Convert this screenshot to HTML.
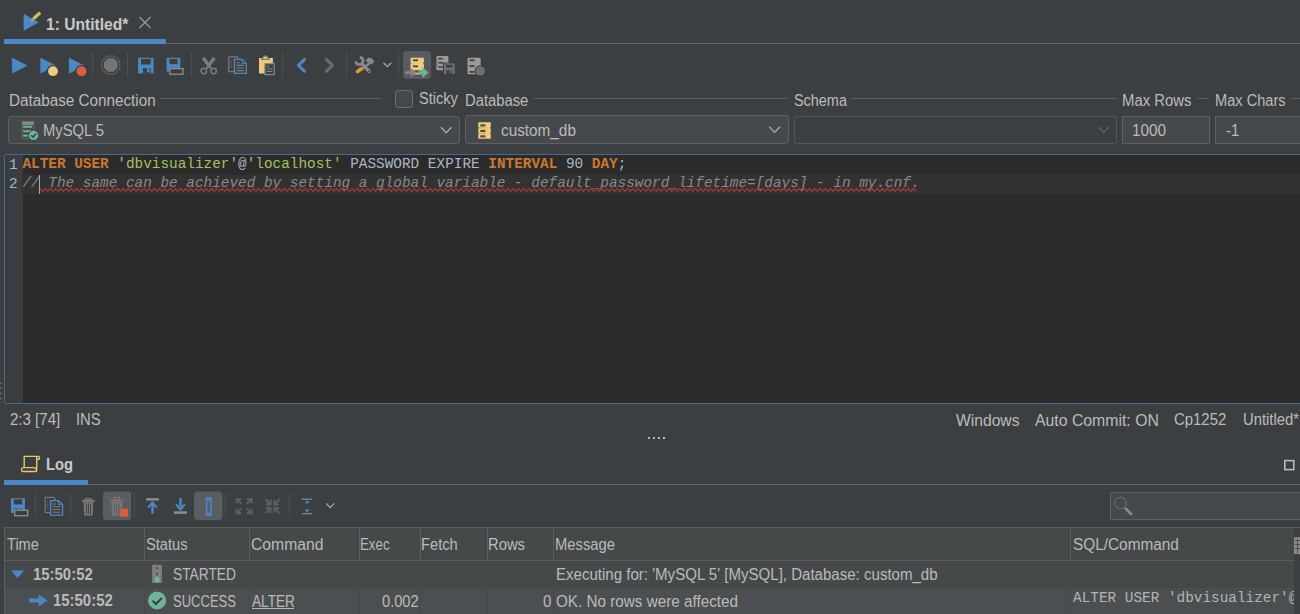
<!DOCTYPE html>
<html><head><meta charset="utf-8">
<style>
*{margin:0;padding:0;box-sizing:border-box}
html,body{width:1300px;height:614px;overflow:hidden;background:#3c3f41}
body{position:relative;font-family:"Liberation Sans",sans-serif;font-size:15px;color:#bbbbbb}
.a{position:absolute}
.t{position:absolute;white-space:pre;line-height:17px}
.hl{position:absolute;height:1px;background:#5b5e60}
.vs{position:absolute;width:1px;background:#55585a}
.tx{position:absolute;white-space:pre;line-height:20px;font-size:16px;transform-origin:0 0}
.mono{font-family:"Liberation Mono",monospace}
svg{position:absolute;overflow:visible}
</style></head><body>

<!-- ===== Top tab ===== -->
<div class="hl" style="left:166px;top:43px;width:1134px;background:#616365"></div>
<div class="a" style="left:4px;top:39px;width:162px;height:5px;background:#4a88c7"></div>

<!-- ===== Form labels ===== -->
<div class="hl" style="left:160px;top:98px;width:221px"></div>
<div class="a" style="left:395px;top:90px;width:18px;height:18px;border:1px solid #6b6e70;border-radius:3px;background:#43494a"></div>
<div class="hl" style="left:533px;top:98px;width:255px"></div>
<div class="hl" style="left:851px;top:98px;width:266px"></div>
<div class="hl" style="left:1197px;top:98px;width:12px"></div>
<div class="hl" style="left:1291px;top:98px;width:9px"></div>

<!-- combos -->
<div class="a" style="left:8px;top:116px;width:452px;height:28px;border:1px solid #5e6163;border-radius:3px;background:#46494b"></div>
<div class="a" style="left:465px;top:115px;width:324px;height:29px;border:1px solid #5e6163;border-radius:3px;background:#46494b"></div>
<div class="a" style="left:794px;top:116px;width:323px;height:28px;border:1px solid #55585a;border-radius:3px;background:#3c3f41"></div>
<div class="a" style="left:1122px;top:116px;width:88px;height:28px;border:1px solid #5e6163;background:#46494b"></div>
<div class="a" style="left:1215px;top:116px;width:90px;height:28px;border:1px solid #5e6163;background:#46494b"></div>

<!-- ===== Editor ===== -->
<div class="a" style="left:4px;top:154px;width:1300px;height:250px;border:1px solid #466a93;border-radius:2px;background:#2b2b2b"></div>
<div class="a" style="left:5px;top:155px;width:17.5px;height:248px;background:#3a3d3f"></div>
<div class="a" style="left:22px;top:175px;width:1278px;height:19px;background:#323232"></div>
<div class="t mono" style="left:9px;top:156px;font-size:14.38px;line-height:19px;color:#a9b7c6">1
2</div>
<div class="t mono" id="ed" style="left:22.4px;top:154.6px;font-size:14.38px;line-height:19px;color:#a9b7c6"><span style="color:#cc7832;font-weight:bold">ALTER USER</span> <span style="color:#a5c25c">'dbvisualizer'</span>@<span style="color:#a5c25c">'localhost'</span> PASSWORD EXPIRE <span style="color:#cc7832;font-weight:bold">INTERVAL</span> 90 <span style="color:#cc7832;font-weight:bold">DAY</span>;
<span style="color:#898989;font-style:italic">// The same can be achieved by setting a global variable - default_password_lifetime=[days] - in my.cnf.</span></div>
<div class="a" style="left:39px;top:175px;width:1px;height:19px;background:#a9a9a9"></div>

<!-- ===== Status bar ===== -->

<!-- splitter dots -->
<div class="a" style="left:648px;top:437px;width:2px;height:2px;background:#bbb"></div>
<div class="a" style="left:653px;top:437px;width:2px;height:2px;background:#bbb"></div>
<div class="a" style="left:658px;top:437px;width:2px;height:2px;background:#bbb"></div>
<div class="a" style="left:663px;top:437px;width:2px;height:2px;background:#bbb"></div>

<!-- ===== Log tab ===== -->
<div class="hl" style="left:88px;top:484px;width:1212px;background:#616365"></div>
<div class="a" style="left:4px;top:480px;width:84px;height:5px;background:#4a88c7"></div>


<!-- search field -->
<div class="a" style="left:1110px;top:492px;width:200px;height:28px;border:1px solid #5e6163;background:#46494b"></div>

<!-- ===== Table ===== -->
<div class="a" style="left:4px;top:527px;width:1300px;height:100px;border:1px solid #5b5e60;background:#45494a"></div>
<div class="hl" style="left:5px;top:560px;width:1295px"></div>
<div class="a" style="left:5px;top:588px;width:1290px;height:26px;background:#4b4f51"></div>

<div class="t mono" style="left:1073px;top:590px;font-size:14.38px;color:#b4b4b4">ALTER USER 'dbvisualizer'@</div>


<div class="a" style="left:144px;top:528px;width:1px;height:32px;background:#5b5e60"></div><div class="a" style="left:249px;top:528px;width:1px;height:32px;background:#5b5e60"></div><div class="a" style="left:359px;top:528px;width:1px;height:32px;background:#5b5e60"></div><div class="a" style="left:420px;top:528px;width:1px;height:32px;background:#5b5e60"></div><div class="a" style="left:487px;top:528px;width:1px;height:32px;background:#5b5e60"></div><div class="a" style="left:553px;top:528px;width:1px;height:32px;background:#5b5e60"></div><div class="a" style="left:1070px;top:528px;width:1px;height:32px;background:#5b5e60"></div><div class="a" style="left:144px;top:588px;width:1px;height:26px;background:#45494b"></div><div class="a" style="left:249px;top:588px;width:1px;height:26px;background:#45494b"></div><div class="a" style="left:359px;top:588px;width:1px;height:26px;background:#45494b"></div><div class="a" style="left:420px;top:588px;width:1px;height:26px;background:#45494b"></div><div class="a" style="left:487px;top:588px;width:1px;height:26px;background:#45494b"></div><div class="a" style="left:553px;top:588px;width:1px;height:26px;background:#45494b"></div><div class="a" style="left:1070px;top:588px;width:1px;height:26px;background:#45494b"></div>
<!--TEXT-START-->
<div class="tx" style="left:46.03px;top:14.90px;transform:scaleX(0.9737);font-weight:bold;color:#c9c9c9">1: Untitled*</div>
<div class="tx" style="left:8.55px;top:91.20px;transform:scaleX(0.9527)">Database Connection</div>
<div class="tx" style="left:418.70px;top:89.40px;transform:scaleX(0.9116)">Sticky</div>
<div class="tx" style="left:464.58px;top:91.30px;transform:scaleX(0.9246)">Database</div>
<div class="tx" style="left:793.75px;top:91.15px;transform:scaleX(0.9014)">Schema</div>
<div class="tx" style="left:1122.07px;top:91.20px;transform:scaleX(0.9297)">Max Rows</div>
<div class="tx" style="left:1215.09px;top:91.20px;transform:scaleX(0.9135)">Max Chars</div>
<div class="tx" style="left:42.88px;top:120.90px;transform:scaleX(0.9242)">MySQL 5</div>
<div class="tx" style="left:501.00px;top:120.80px;transform:scaleX(0.9570)">custom_db</div>
<div class="tx" style="left:1132.04px;top:120.90px;transform:scaleX(0.9583)">1000</div>
<div class="tx" style="left:1225.50px;top:120.90px;transform:scaleX(0.9248)">-1</div>
<div class="tx" style="left:10.00px;top:410.40px;transform:scaleX(0.9409)">2:3 [74]</div>
<div class="tx" style="left:75.68px;top:410.40px;transform:scaleX(0.9240)">INS</div>
<div class="tx" style="left:955.80px;top:410.50px;transform:scaleX(0.9783)">Windows</div>
<div class="tx" style="left:1034.80px;top:410.50px;transform:scaleX(0.9879)">Auto Commit: ON</div>
<div class="tx" style="left:1174.40px;top:410.20px;transform:scaleX(0.9315)">Cp1252</div>
<div class="tx" style="left:1242.77px;top:410.20px;transform:scaleX(0.9255)">Untitled*</div>
<div class="tx" style="left:45.68px;top:455.40px;transform:scaleX(0.9221);font-weight:bold;color:#c9c9c9">Log</div>
<div class="tx" style="left:6.50px;top:534.60px;transform:scaleX(0.9127)">Time</div>
<div class="tx" style="left:146.00px;top:534.60px;transform:scaleX(0.9149)">Status</div>
<div class="tx" style="left:250.50px;top:534.60px;transform:scaleX(0.9807)">Command</div>
<div class="tx" style="left:360.47px;top:534.60px;transform:scaleX(0.8302)">Exec</div>
<div class="tx" style="left:421.08px;top:534.60px;transform:scaleX(0.9182)">Fetch</div>
<div class="tx" style="left:488.07px;top:534.60px;transform:scaleX(0.9255)">Rows</div>
<div class="tx" style="left:554.58px;top:534.60px;transform:scaleX(0.9231)">Message</div>
<div class="tx" style="left:1072.90px;top:534.60px;transform:scaleX(0.9601)">SQL/Command</div>
<div class="tx" style="left:32.77px;top:564.60px;transform:scaleX(0.9327);font-weight:bold">15:50:52</div>
<div class="tx" style="left:172.75px;top:565.20px;transform:scaleX(0.8597)">STARTED</div>
<div class="tx" style="left:555.66px;top:565.20px;transform:scaleX(0.9406)">Executing for: 'MySQL 5' [MySQL], Database: custom_db</div>
<div class="tx" style="left:53.47px;top:591.20px;transform:scaleX(0.9327);font-weight:bold">15:50:52</div>
<div class="tx" style="left:172.75px;top:591.70px;transform:scaleX(0.8144)">SUCCESS</div>
<div class="tx" style="left:251.70px;top:591.60px;transform:scaleX(0.8529)">ALTER</div>
<div class="tx" style="left:382.00px;top:591.60px;transform:scaleX(0.9155)">0.002</div>
<div class="tx" style="left:542.50px;top:591.60px;transform:scaleX(0.9444)">0</div>
<div class="tx" style="left:556.00px;top:591.90px;transform:scaleX(0.9532)">OK. No rows were affected</div>
<!--TEXT-END-->
<div class="a" style="left:251.7px;top:608px;width:42.5px;height:1px;background:#b5b5b5"></div>
<svg class="a" style="left:0;top:0" width="1300" height="614" viewBox="0 0 1300 614">
<!-- tab icon -->
<path d="M24 14.5 L38 22.4 L24 30.2 Z" fill="#4a88c7" stroke="#4a88c7" stroke-width="0.8" stroke-linejoin="round"/>
<path d="M33.6 18.6 L40.2 12.6" stroke="#dcbd6c" stroke-width="3.1" stroke-linecap="butt"/>
<path d="M31.2 21.3 L33.8 18.5" stroke="#b8a565" stroke-width="2.2"/>
<path d="M34.5 19.8 L40.6 14.2 M32.6 17.6 L38.8 11.9" stroke="#b59a55" stroke-width="0.5"/>
<!-- close X -->
<path d="M139.5 17 L150.5 28 M150.5 17 L139.5 28" stroke="#9a9a9a" stroke-width="1.2"/>

<path d="M40.0 188.4 L42.6 191.4 L45.2 188.4 L47.8 191.4 L50.4 188.4 L53.0 191.4 L55.6 188.4 L58.2 191.4 L60.8 188.4 L63.4 191.4 L66.0 188.4 L68.6 191.4 L71.2 188.4 L73.8 191.4 L76.4 188.4 L79.0 191.4 L81.6 188.4 L84.2 191.4 L86.8 188.4 L89.4 191.4 L92.0 188.4 L94.6 191.4 L97.2 188.4 L99.8 191.4 L102.4 188.4 L105.0 191.4 L107.6 188.4 L110.2 191.4 L112.8 188.4 L115.4 191.4 L118.0 188.4 L120.6 191.4 L123.2 188.4 L125.8 191.4 L128.4 188.4 L131.0 191.4 L133.6 188.4 L136.2 191.4 L138.8 188.4 L141.4 191.4 L144.0 188.4 L146.6 191.4 L149.2 188.4 L151.8 191.4 L154.4 188.4 L157.0 191.4 L159.6 188.4 L162.2 191.4 L164.8 188.4 L167.4 191.4 L170.0 188.4 L172.6 191.4 L175.2 188.4 L177.8 191.4 L180.4 188.4 L183.0 191.4 L185.6 188.4 L188.2 191.4 L190.8 188.4 L193.4 191.4 L196.0 188.4 L198.6 191.4 L201.2 188.4 L203.8 191.4 L206.4 188.4 L209.0 191.4 L211.6 188.4 L214.2 191.4 L216.8 188.4 L219.4 191.4 L222.0 188.4 L224.6 191.4 L227.2 188.4 L229.8 191.4 L232.4 188.4 L235.0 191.4 L237.6 188.4 L240.2 191.4 L242.8 188.4 L245.4 191.4 L248.0 188.4 L250.6 191.4 L253.2 188.4 L255.8 191.4 L258.4 188.4 L261.0 191.4 L263.6 188.4 L266.2 191.4 L268.8 188.4 L271.4 191.4 L274.0 188.4 L276.6 191.4 L279.2 188.4 L281.8 191.4 L284.4 188.4 L287.0 191.4 L289.6 188.4 L292.2 191.4 L294.8 188.4 L297.4 191.4 L300.0 188.4 L302.6 191.4 L305.2 188.4 L307.8 191.4 L310.4 188.4 L313.0 191.4 L315.6 188.4 L318.2 191.4 L320.8 188.4 L323.4 191.4 L326.0 188.4 L328.6 191.4 L331.2 188.4 L333.8 191.4 L336.4 188.4 L339.0 191.4 L341.6 188.4 L344.2 191.4 L346.8 188.4 L349.4 191.4 L352.0 188.4 L354.6 191.4 L357.2 188.4 L359.8 191.4 L362.4 188.4 L365.0 191.4 L367.6 188.4 L370.2 191.4 L372.8 188.4 L375.4 191.4 L378.0 188.4 L380.6 191.4 L383.2 188.4 L385.8 191.4 L388.4 188.4 L391.0 191.4 L393.6 188.4 L396.2 191.4 L398.8 188.4 L401.4 191.4 L404.0 188.4 L406.6 191.4 L409.2 188.4 L411.8 191.4 L414.4 188.4 L417.0 191.4 L419.6 188.4 L422.2 191.4 L424.8 188.4 L427.4 191.4 L430.0 188.4 L432.6 191.4 L435.2 188.4 L437.8 191.4 L440.4 188.4 L443.0 191.4 L445.6 188.4 L448.2 191.4 L450.8 188.4 L453.4 191.4 L456.0 188.4 L458.6 191.4 L461.2 188.4 L463.8 191.4 L466.4 188.4 L469.0 191.4 L471.6 188.4 L474.2 191.4 L476.8 188.4 L479.4 191.4 L482.0 188.4 L484.6 191.4 L487.2 188.4 L489.8 191.4 L492.4 188.4 L495.0 191.4 L497.6 188.4 L500.2 191.4 L502.8 188.4 L505.4 191.4 L508.0 188.4 L510.6 191.4 L513.2 188.4 L515.8 191.4 L518.4 188.4 L521.0 191.4 L523.6 188.4 L526.2 191.4 L528.8 188.4 L531.4 191.4 L534.0 188.4 L536.6 191.4 L539.2 188.4 L541.8 191.4 L544.4 188.4 L547.0 191.4 L549.6 188.4 L552.2 191.4 L554.8 188.4 L557.4 191.4 L560.0 188.4 L562.6 191.4 L565.2 188.4 L567.8 191.4 L570.4 188.4 L573.0 191.4 L575.6 188.4 L578.2 191.4 L580.8 188.4 L583.4 191.4 L586.0 188.4 L588.6 191.4 L591.2 188.4 L593.8 191.4 L596.4 188.4 L599.0 191.4 L601.6 188.4 L604.2 191.4 L606.8 188.4 L609.4 191.4 L612.0 188.4 L614.6 191.4 L617.2 188.4 L619.8 191.4 L622.4 188.4 L625.0 191.4 L627.6 188.4 L630.2 191.4 L632.8 188.4 L635.4 191.4 L638.0 188.4 L640.6 191.4 L643.2 188.4 L645.8 191.4 L648.4 188.4 L651.0 191.4 L653.6 188.4 L656.2 191.4 L658.8 188.4 L661.4 191.4 L664.0 188.4 L666.6 191.4 L669.2 188.4 L671.8 191.4 L674.4 188.4 L677.0 191.4 L679.6 188.4 L682.2 191.4 L684.8 188.4 L687.4 191.4 L690.0 188.4 L692.6 191.4 L695.2 188.4 L697.8 191.4 L700.4 188.4 L703.0 191.4 L705.6 188.4 L708.2 191.4 L710.8 188.4 L713.4 191.4 L716.0 188.4 L718.6 191.4 L721.2 188.4 L723.8 191.4 L726.4 188.4 L729.0 191.4 L731.6 188.4 L734.2 191.4 L736.8 188.4 L739.4 191.4 L742.0 188.4 L744.6 191.4 L747.2 188.4 L749.8 191.4 L752.4 188.4 L755.0 191.4 L757.6 188.4 L760.2 191.4 L762.8 188.4 L765.4 191.4 L768.0 188.4 L770.6 191.4 L773.2 188.4 L775.8 191.4 L778.4 188.4 L781.0 191.4 L783.6 188.4 L786.2 191.4 L788.8 188.4 L791.4 191.4 L794.0 188.4 L796.6 191.4 L799.2 188.4 L801.8 191.4 L804.4 188.4 L807.0 191.4 L809.6 188.4 L812.2 191.4 L814.8 188.4 L817.4 191.4 L820.0 188.4 L822.6 191.4 L825.2 188.4 L827.8 191.4 L830.4 188.4 L833.0 191.4 L835.6 188.4 L838.2 191.4 L840.8 188.4 L843.4 191.4 L846.0 188.4 L848.6 191.4 L851.2 188.4 L853.8 191.4 L856.4 188.4 L859.0 191.4 L861.6 188.4 L864.2 191.4 L866.8 188.4 L869.4 191.4 L872.0 188.4 L874.6 191.4 L877.2 188.4 L879.8 191.4 L882.4 188.4 L885.0 191.4 L887.6 188.4 L890.2 191.4 L892.8 188.4 L895.4 191.4 L898.0 188.4 L900.6 191.4 L903.2 188.4 L905.8 191.4 L908.4 188.4 L911.0 191.4 L913.6 188.4 L916.2 191.4" fill="none" stroke="#ad3636" stroke-width="1.1"/>
<rect x="0" y="382.5" width="1.5" height="1.5" fill="#737373"/><rect x="0" y="387.5" width="1.5" height="1.5" fill="#737373"/><rect x="0" y="392.6" width="1.5" height="1.5" fill="#737373"/><rect x="0" y="397.7" width="1.5" height="1.5" fill="#737373"/>
<!-- ===== main toolbar ===== -->
<path d="M12.3 58.3 L26.8 65.6 L12.3 73.1 Z" fill="#4a88c7" stroke="#4a88c7" stroke-width="0.8" stroke-linejoin="round"/>
<path d="M40.8 58.3 L55.3 65.6 L40.8 73.1 Z" fill="#4a88c7" stroke="#4a88c7" stroke-width="0.8" stroke-linejoin="round"/>
<circle cx="53" cy="71.2" r="6.2" fill="#3c3f41"/>
<circle cx="53" cy="71.2" r="4.9" fill="#eec97f"/>
<path d="M69.3 58.3 L83.8 65.6 L69.3 73.1 Z" fill="#4a88c7" stroke="#4a88c7" stroke-width="0.8" stroke-linejoin="round"/>
<circle cx="81.5" cy="71.2" r="6.2" fill="#3c3f41"/>
<circle cx="81.5" cy="71.2" r="4.9" fill="#df5e3d"/>
<rect x="92" y="52" width="1" height="25" fill="#4c4f51"/>
<!-- stop octagon -->
<path d="M107.1 56.1 L114.5 56.1 L119.7 61.3 L119.7 68.7 L114.5 73.9 L107.1 73.9 L101.9 68.7 L101.9 61.3 Z" fill="none" stroke="#606060" stroke-width="1.1"/>
<path d="M108 58.2 L113.6 58.2 L117.6 62.2 L117.6 67.8 L113.6 71.8 L108 71.8 L104 67.8 L104 62.2 Z" fill="#757575"/>
<rect x="127" y="52" width="1" height="25" fill="#4c4f51"/>
<!-- save -->
<path d="M138 57.8 H153.6 V73.3 H138 Z" fill="#4a88c7"/>
<rect x="141" y="57.8" width="9.7" height="6.7" fill="#3c3f41"/>
<rect x="141" y="57.8" width="9.7" height="1.1" fill="#7c7c7c"/>
<rect x="143" y="68.2" width="7.7" height="5.1" fill="#3c3f41"/>
<rect x="147" y="68.2" width="2.6" height="4" fill="#4a88c7"/>
<!-- save as -->
<path d="M166.6 57.8 H180.3 V71.5 H166.6 Z" fill="#4a88c7"/>
<rect x="169.4" y="57.8" width="8.1" height="6.4" fill="#3c3f41"/>
<rect x="169.4" y="57.8" width="8.1" height="1.1" fill="#7c7c7c"/>
<rect x="169.4" y="67.8" width="8.1" height="3.7" fill="#3c3f41"/>
<rect x="169.8" y="68.6" width="13.2" height="5.6" fill="#3c3f41" stroke="#8e8e8e" stroke-width="1.3"/>
<rect x="191" y="52" width="1" height="25" fill="#4c4f51"/>
<!-- scissors -->
<path d="M201.9 59.2 Q202.4 56.6 205.3 57.6 L210 64.6 L211.8 68.3 L210.3 69.1 L207.4 66.2 Z" fill="#7c7c7c"/>
<path d="M215.6 59.2 Q215.1 56.6 212.2 57.6 L207.5 64.6 L205.7 68.3 L207.2 69.1 L210.1 66.2 Z" fill="#7c7c7c"/>
<circle cx="203.8" cy="71" r="2.7" fill="none" stroke="#7c7c7c" stroke-width="1.5"/>
<circle cx="213.7" cy="71" r="2.7" fill="none" stroke="#7c7c7c" stroke-width="1.5"/>
<!-- copy -->
<path d="M228.8 56.8 H237 L238.8 58.6 V71.6 H228.8 Z" fill="#3c3f41" stroke="#7a7a7a" stroke-width="1.2"/>
<path d="M230.8 61 H232.3 M230.8 64 H232.3 M230.8 67 H232.3" stroke="#7a7a7a" stroke-width="1"/>
<path d="M234.5 59.4 H242.3 L246.3 63.4 V73.3 H234.5 Z" fill="#3c3f41" stroke="#4a88c7" stroke-width="1.3"/>
<path d="M242 59.6 V63.6 H246" fill="none" stroke="#4a88c7" stroke-width="1"/>
<path d="M236.5 62.7 H240 M236.5 65.4 H244 M236.5 68 H244 M236.5 70.6 H244" stroke="#7e7e7e" stroke-width="1.1"/>
<!-- paste -->
<rect x="259" y="58" width="13.9" height="15.5" fill="#edc97b"/>
<path d="M261.5 59.3 L264 56.5 Q265.4 55.2 266.8 56.5 L269.3 59.3 Z" fill="#e6c477" stroke="#7e7e7e" stroke-width="1.3" stroke-linejoin="round"/>
<rect x="264.9" y="63.6" width="9.3" height="11" fill="#3c3f41" stroke="#8a8a8a" stroke-width="1.2"/>
<path d="M266.7 66.4 H269 M266.7 69 H272.5 M266.7 71.5 H272.5" stroke="#8a8a8a" stroke-width="1.1"/>
<rect x="282" y="52" width="1" height="25" fill="#4c4f51"/>
<!-- back/forward -->
<path d="M304.6 59.3 L298.4 65.3 L304.6 71.3" fill="none" stroke="#4a88c7" stroke-width="3" stroke-linecap="round" stroke-linejoin="round"/>
<path d="M326.3 59.3 L332.5 65.3 L326.3 71.3" fill="none" stroke="#6b6b6b" stroke-width="3" stroke-linecap="round" stroke-linejoin="round"/>
<rect x="346" y="52" width="1" height="25" fill="#4c4f51"/>
<!-- tools -->
<path d="M362 64 L369.2 71.2" stroke="#8a8a8a" stroke-width="3.4" stroke-linecap="round"/>
<path d="M359.8 57.2 A3.7 3.7 0 1 1 355.7 61.3" fill="none" stroke="#8a8a8a" stroke-width="2.6"/>
<circle cx="369.2" cy="71.2" r="0.9" fill="#3c3f41"/>
<path d="M370.2 62.6 L361 70.2" stroke="#8a8a8a" stroke-width="2.3"/>
<path d="M365.6 60.2 L368.6 57.4 L372 58.4 L374.2 61.8 L371.6 64.6 L369.8 62.4 L367.6 62.6 Z" fill="#8a8a8a"/>
<path d="M357.6 71.6 L360.9 68.9" stroke="#e8913c" stroke-width="3.8" stroke-linecap="round"/>
<path d="M383.5 62.8 L387.4 66.7 L391.3 62.8" fill="none" stroke="#a8a8a8" stroke-width="1.3"/>
<rect x="398" y="52" width="1" height="25" fill="#4c4f51"/>
<!-- highlighted db button -->
<rect x="403" y="51" width="28" height="28" rx="4" fill="#585b5e"/>
<rect x="410.5" y="57.7" width="13.4" height="12.8" fill="#efca7a"/><rect x="414" y="72.8" width="7" height="1.6" fill="#efca7a"/><rect x="415" y="70.5" width="5" height="1.6" fill="#3f4650"/>
<rect x="413" y="59.4" width="5" height="1.8" fill="#3f4650"/>
<rect x="413" y="65.4" width="5" height="1.8" fill="#3f4650"/>
<rect x="410.5" y="62.4" width="0.8" height="1.4" fill="#585b5e"/><rect x="423.1" y="62.4" width="0.8" height="1.4" fill="#585b5e"/>
<path d="M405.6 71.3 H410.8 V68.2 L416 72.5 L410.8 76.8 V73.7 H405.6 Z" fill="#858585" stroke="#858585" stroke-width="0.6" stroke-linejoin="round"/>
<path d="M418.2 71.2 H422.6 V67.8 L428.2 72.6 L422.6 77.4 V74 H418.2 Z" fill="#6db59a" stroke="#6db59a" stroke-width="0.7" stroke-linejoin="round"/>
<!-- db save -->
<rect x="436.4" y="56" width="12" height="14.2" rx="1" fill="#9a9a9a"/>
<rect x="438.3" y="57.8" width="4.6" height="1.6" fill="#3c3f41"/>
<rect x="438.3" y="62" width="4.6" height="1.6" fill="#3c3f41"/>
<rect x="438.3" y="66.2" width="4.6" height="1.6" fill="#3c3f41"/>
<rect x="436.4" y="60.5" width="0.9" height="0.9" fill="#3c3f41"/><rect x="436.4" y="64.7" width="0.9" height="0.9" fill="#3c3f41"/>
<rect x="443" y="62.6" width="12.7" height="12.4" fill="#3c3f41"/>
<rect x="444" y="63.6" width="10.7" height="10.4" fill="#6e6e6e"/>
<rect x="446" y="63.6" width="6.5" height="3.8" fill="#3c3f41"/>
<rect x="446" y="63.6" width="6.5" height="0.9" fill="#858585"/>
<rect x="446.5" y="70" width="5.5" height="4" fill="#3c3f41"/>
<rect x="449.5" y="70" width="1.6" height="2.8" fill="#6e6e6e"/>
<!-- db circle -->
<rect x="467.5" y="57.7" width="13.2" height="16.6" rx="1" fill="#9a9a9a"/>
<rect x="469.6" y="59.4" width="5" height="1.8" fill="#3c3f41"/>
<rect x="469.6" y="65.2" width="5" height="1.8" fill="#3c3f41"/>
<rect x="469.6" y="71" width="5" height="1.8" fill="#3c3f41"/>
<circle cx="480.3" cy="70.9" r="5.6" fill="#3c3f41"/>
<circle cx="480.3" cy="70.9" r="4.6" fill="#707070"/>
</svg>


<svg class="a" style="left:0;top:0" width="1300" height="614" viewBox="0 0 1300 614">
<!-- combo icon: mysql connected -->
<rect x="21.8" y="121" width="12.4" height="17.8" fill="#6b6b6b"/>
<rect x="22.6" y="125.2" width="10.8" height="12.9" fill="#45494a"/>
<rect x="22.6" y="121.8" width="10.8" height="3" fill="#8a8a8a"/>
<rect x="23.2" y="125.8" width="8.6" height="2" fill="#6db59a"/>
<rect x="23.2" y="130.2" width="8.6" height="2" fill="#6db59a"/>
<rect x="23.2" y="134.6" width="8.6" height="2" fill="#6db59a"/>
<circle cx="33.6" cy="135.4" r="5.6" fill="#45494a"/>
<circle cx="33.6" cy="135.4" r="4.6" fill="#6db59a"/>
<path d="M31.2 135.3 L33 137.1 L36.2 133.8" fill="none" stroke="#3b3f41" stroke-width="1.5"/>
<!-- combo chevrons -->
<path d="M441 127.3 L446.2 132.8 L451.4 127.3" fill="none" stroke="#a9a9a9" stroke-width="1.3"/>
<path d="M769.3 126.7 L774.6 132.4 L780 126.7" fill="none" stroke="#a9a9a9" stroke-width="1.3"/>
<path d="M1098.5 127 L1103.6 132.4 L1108.8 127" fill="none" stroke="#5f6264" stroke-width="1.3"/>
<!-- yellow db icon -->
<path d="M478.3 122.3 H490.8 V127 L490 127.9 L490.8 128.8 V132.4 L490 133.3 L490.8 134.2 V138.8 H478.3 V134.2 L479.1 133.3 L478.3 132.4 V128.8 L479.1 127.9 L478.3 127 Z" fill="#efca7a"/>
<rect x="480.3" y="124.4" width="5" height="2.1" fill="#45494a"/>
<rect x="480.3" y="129.9" width="5" height="2.1" fill="#45494a"/>
<rect x="480.3" y="135.3" width="5" height="2.1" fill="#45494a"/>
<rect x="478.3" y="127.6" width="8" height="0.6" fill="#b89a5c"/>
<rect x="478.3" y="133" width="8" height="0.6" fill="#b89a5c"/>

<!-- log tab icon (scroll) -->
<path d="M24.2 467.4 V456.4 H38.2 Q39.8 456.6 39.4 458.6 Q38.8 460 36.8 459.4 M36.7 456.4 V470.6 Q36.6 471.5 35.5 471.5 H23 Q21.5 471.4 21.5 469.5 Q21.6 467.6 23 467.6 H34.5 Q35.6 467.8 35.6 469.5" fill="none" stroke="#e8c46f" stroke-width="1.4" stroke-linejoin="round"/>
<!-- maximize -->
<rect x="1284.8" y="460.6" width="9" height="9" fill="none" stroke="#bbbbbb" stroke-width="1.6"/>
<!-- log toolbar -->
<path d="M11 498.2 H24.9 V512.9 H11 Z" fill="#4a88c7"/>
<rect x="13.8" y="498.2" width="8.3" height="6.2" fill="#3c3f41"/>
<rect x="13.8" y="498.2" width="8.3" height="1.1" fill="#7c7c7c"/>
<rect x="13.8" y="508.6" width="8.3" height="4.3" fill="#3c3f41"/>
<rect x="18.2" y="508.6" width="2.3" height="1.8" fill="#4a88c7"/>
<rect x="14.6" y="510.2" width="13.1" height="5.5" fill="#3c3f41" stroke="#8e8e8e" stroke-width="1.3"/>
<rect x="35" y="493" width="1" height="25" fill="#4c4f51"/>
<path d="M45.2 497.4 H53.6 L55.2 499 V512.6 H45.2 Z" fill="#3c3f41" stroke="#7a7a7a" stroke-width="1.1"/>
<path d="M47 502 H48.4 M47 505 H48.4 M47 508 H48.4" stroke="#7a7a7a" stroke-width="1"/>
<path d="M50.6 500.6 H58.6 L62.6 504.6 V515.2 H50.6 Z" fill="#3c3f41" stroke="#4a88c7" stroke-width="1.3"/>
<path d="M58.5 500.8 V504.6 H62.4" fill="none" stroke="#4a88c7" stroke-width="1"/>
<path d="M52.6 504 H56 M52.6 506.8 H60.4 M52.6 509.5 H60.4 M52.6 512.2 H60.4" stroke="#7e7e7e" stroke-width="1.1"/>
<rect x="70" y="493" width="1" height="25" fill="#4c4f51"/>
<!-- trash -->
<path d="M82.2 500.8 H94.6" stroke="#7a7a7a" stroke-width="2.2"/>
<path d="M85.8 500 V498.6 H90.8 V500" fill="none" stroke="#7a7a7a" stroke-width="1.3"/>
<path d="M83.6 502.2 H93.2 L92.6 515.6 H84.2 Z" fill="#7a7a7a"/>
<path d="M86.3 503.6 V514.2 M88.4 503.6 V514.2 M90.5 503.6 V514.2" stroke="#3c3f41" stroke-width="1"/>
<!-- highlighted trash btn -->
<rect x="103" y="491.5" width="28.2" height="28.5" rx="4" fill="#5b5e61"/>
<path d="M110.2 500.6 H123.4" stroke="#767676" stroke-width="2"/>
<path d="M114.2 500 V497.3 H119.4 V500" fill="none" stroke="#767676" stroke-width="1.3"/>
<path d="M111.4 501.8 H122.2 L121.6 515.5 H112 Z" fill="#767676"/>
<path d="M114.3 503.4 V514 M116.6 503.4 V514 M118.9 503.4 V514" stroke="#5b5e61" stroke-width="1"/>
<rect x="119.6" y="508.3" width="8.6" height="8.4" fill="#5b5e61"/>
<rect x="120.2" y="508.8" width="7.8" height="7.8" fill="#e05d3d"/>
<rect x="134" y="493" width="1" height="25" fill="#4c4f51"/>
<!-- scroll to top -->
<rect x="146" y="498.1" width="13" height="2.5" fill="#8c8c8c"/>
<path d="M152.5 513.8 V504" stroke="#4a88c7" stroke-width="2.4"/>
<path d="M148.2 507.6 L152.5 502.4 L156.8 507.6" fill="none" stroke="#4a88c7" stroke-width="2.2" stroke-linejoin="round"/>
<!-- scroll to bottom -->
<rect x="174" y="511.3" width="13" height="2.5" fill="#8c8c8c"/>
<path d="M180.5 498 V507.6" stroke="#4a88c7" stroke-width="2.4"/>
<path d="M176.2 504.4 L180.5 509.6 L184.8 504.4" fill="none" stroke="#4a88c7" stroke-width="2.2" stroke-linejoin="round"/>
<!-- highlighted 2 -->
<rect x="194" y="491.5" width="28.5" height="28.5" rx="4" fill="#5b5e61"/>
<rect x="206.7" y="498.2" width="4.2" height="17" fill="none" stroke="#4a88c7" stroke-width="1.5"/>
<rect x="205.9" y="497.4" width="5.8" height="2.5" fill="#4a88c7"/>
<rect x="205.9" y="512.8" width="5.8" height="2.5" fill="#4a88c7"/>
<rect x="208" y="500.5" width="1.6" height="1.2" fill="#4a88c7"/>
<rect x="225" y="493" width="1" height="25" fill="#4c4f51"/>
<!-- expand -->
<g stroke="#5f5f5f" stroke-width="2" fill="none">
<path d="M236.6 499 L241.5 503.9 M236.6 503.6 V499 H241.2"/>
<path d="M251.6 499 L246.7 503.9 M251.6 503.6 V499 H247"/>
<path d="M236.6 513.3 L241.5 508.4 M236.6 508.7 V513.3 H241.2"/>
<path d="M251.6 513.3 L246.7 508.4 M251.6 508.7 V513.3 H247"/>
</g>
<!-- collapse -->
<g stroke="#5f5f5f" stroke-width="2" fill="none">
<path d="M265.2 499 L270.6 504.4 M265.8 504.4 H270.6 V499.6"/>
<path d="M279.8 499 L274.4 504.4 M279.2 504.4 H274.4 V499.6"/>
<path d="M265.2 513.4 L270.6 508 M265.8 508 H270.6 V512.8"/>
<path d="M279.8 513.4 L274.4 508 M279.2 508 H274.4 V512.8"/>
</g>
<rect x="289" y="493" width="1" height="25" fill="#4c4f51"/>
<!-- height -->
<rect x="302" y="498.6" width="10" height="1.3" fill="#858585"/>
<path d="M304.8 503.2 L307.2 500.4 L309.6 503.2 Z" fill="#4a88c7"/>
<path d="M304.8 509.4 L307.2 512.4 L309.6 509.4 Z" fill="#4a88c7"/>
<rect x="302" y="513" width="10" height="1.3" fill="#858585"/>
<path d="M326.2 503.4 L330.2 507.6 L334.2 503.4" fill="none" stroke="#a8a8a8" stroke-width="1.3"/>

<!-- search -->
<circle cx="1120.4" cy="503" r="5.8" fill="none" stroke="#6a6a6a" stroke-width="1.1"/>
<path d="M1125.8 508.6 L1131 514" stroke="#8a8a8a" stroke-width="2.6" stroke-linecap="round"/>

<!-- table row icons -->
<path d="M11 570.6 H24.2 L17.6 578 Z" fill="#4a88c7"/>
<path d="M29.2 598.8 H39 V595 L47.2 600.5 L39 606 V602.2 H29.2 Z" fill="#4a88c7" stroke="#4a88c7" stroke-width="0.5" stroke-linejoin="round"/>
<!-- traffic light -->
<rect x="152" y="564.8" width="10" height="18.2" fill="#7a7a7a"/>
<circle cx="157" cy="568.4" r="2.7" fill="#666" stroke="#909090" stroke-width="0.9"/>
<circle cx="157" cy="574" r="2.7" fill="#666" stroke="#909090" stroke-width="0.9"/>
<circle cx="157" cy="579.6" r="2.9" fill="#6db59a"/>
<!-- check circle -->
<circle cx="157.1" cy="600.5" r="9" fill="#6db59a"/>
<path d="M152.6 600.8 L155.9 604 L161.9 597.9" fill="none" stroke="#3c3f41" stroke-width="2.1"/>
<!-- table corner button -->
<rect x="1294" y="528" width="6" height="86" fill="#3e4143"/>
<rect x="1294" y="537.3" width="6" height="16.7" fill="#8a8a8a"/>
<path d="M1295 540.5 H1300 M1295 544.5 H1300 M1295 548.5 H1300 M1297.5 539 V553" stroke="#4a4d4f" stroke-width="0.9"/>
</svg>

</body></html>
